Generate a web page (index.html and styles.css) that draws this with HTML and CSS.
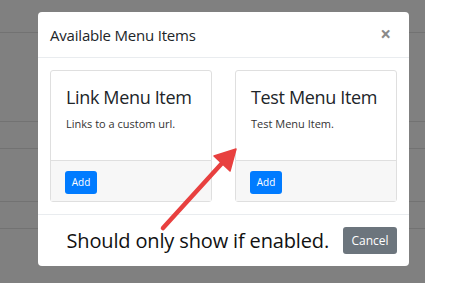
FILE: index.html
```html
<!DOCTYPE html>
<html>
<head>
<meta charset="utf-8">
<link rel="stylesheet" href="styles.css">
</head>
<body>
<div class="backdrop">
  <div class="modal">
    <div class="modal-header">
      <h5 class="modal-title">Available Menu Items</h5>
      <span class="close">×</span>
    </div>
    <div class="modal-body">
      <div class="card">
        <div class="card-body">
          <h3 class="card-title">Link Menu Item</h3>
          <p class="card-text">Links to a custom url.</p>
        </div>
        <div class="card-footer"><span class="btn btn-primary">Add</span></div>
      </div>
      <div class="card">
        <div class="card-body">
          <h3 class="card-title">Test Menu Item</h3>
          <p class="card-text">Test Menu Item.</p>
        </div>
        <div class="card-footer"><span class="btn btn-primary">Add</span></div>
      </div>
    </div>
    <div class="modal-footer">
      <span class="note">Should only show if enabled.</span>
      <span class="btn btn-secondary">Cancel</span>
    </div>
  </div>
</div>
<svg class="arrow" width="474" height="300" viewBox="0 0 474 300">
  <line x1="163" y1="228" x2="224" y2="161" stroke="#e8403f" stroke-width="4.5" stroke-linecap="round"/>
  <polygon points="236,149 230,171 214,156" fill="#e8403f" stroke="#e8403f" stroke-width="1.5" stroke-linejoin="round"/>
</svg>
</body>
</html>
```
FILE: styles.css
```css
* { box-sizing: border-box; }
html, body { margin: 0; padding: 0; background: #fff; }
body {
  width: 474px;
  height: 300px;
  overflow: hidden;
  position: relative;
  font-family: "Open Sans", "Noto Sans", sans-serif;
  color: #212529;
}
.backdrop {
  width: 425px;
  height: 283px;
  background-color: #808080;
  background-image:
    linear-gradient(#727272, #727272),
    linear-gradient(#727272, #727272),
    linear-gradient(#727272, #727272),
    linear-gradient(#727272, #727272),
    linear-gradient(#727272, #727272);
  background-repeat: no-repeat;
  background-size: 100% 1px;
  background-position: 0 32px, 0 121px, 0 148px, 0 201px, 0 228px;
  padding: 12px 0 0 38px;
}
.modal {
  width: 371px;
  height: 254px;
  background: #fff;
  border-radius: 4px;
  display: flex;
  flex-direction: column;
}
.modal-header {
  height: 46px;
  padding: 0 12px;
  border-bottom: 1px solid #e9ecef;
  display: flex;
  align-items: center;
  justify-content: space-between;
}
.modal-title {
  margin: 0;
  font-size: 15px;
  font-weight: 400;
  letter-spacing: -0.2px;
}
.close {
  font-size: 19px;
  font-weight: 700;
  color: #8a8a8a;
  line-height: 1;
  margin-right: 6px;
}
.modal-body {
  padding: 12px;
  display: flex;
  gap: 23px;
  border-bottom: 1px solid #e9ecef;
}
.card {
  width: 162px;
  border: 1px solid #dfdfdf;
  border-radius: 3px;
  display: flex;
  flex-direction: column;
}
.card-body {
  height: 89px;
  padding: 15px 15px;
}
.card-title {
  margin: 0 0 8px;
  font-size: 18px;
  font-weight: 500;
  line-height: 22px;
  letter-spacing: -0.35px;
  white-space: nowrap;
}
.card-text {
  margin: 0;
  font-size: 11px;
  color: #333;
  white-space: nowrap;
}
.card-footer {
  background: #f7f7f7;
  border-top: 1px solid #dfdfdf;
  padding: 8px 14px;
  height: 41px;
}
.btn {
  display: inline-flex;
  align-items: center;
  justify-content: center;
  color: #fff;
  border-radius: 3px;
}
.btn-primary {
  background: #007bff;
  width: 32px;
  height: 23px;
  font-size: 10px;
}
.modal-footer {
  flex: 1;
  display: flex;
  align-items: center;
  justify-content: flex-end;
  padding: 0 12px;
  gap: 14px;
}
.note {
  font-size: 20px;
  color: #111;
  letter-spacing: -0.15px;
}
.btn-secondary {
  background: #6c757d;
  width: 54px;
  height: 27px;
  font-size: 12px;
}
.arrow {
  position: absolute;
  left: 0;
  top: 0;
}
```
